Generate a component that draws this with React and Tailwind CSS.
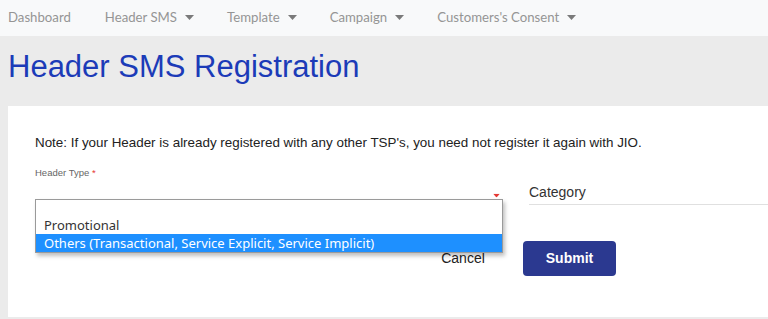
import React from 'react';

const navItems = [
  { label: 'Dashboard', caret: false },
  { label: 'Header SMS', caret: true },
  { label: 'Template', caret: true },
  { label: 'Campaign', caret: true },
  { label: "Customers's Consent", caret: true },
];

const Caret = ({ className }) => (
  <svg width="9" height="5" viewBox="0 0 9 5" className={className}>
    <path d="M0 0 L9 0 L4.5 5 Z" fill="currentColor" />
  </svg>
);

const App = () => {
  return (
    <div className="w-[768px] h-[319px] overflow-hidden bg-[#ebebeb]" style={{ fontFamily: '"Liberation Sans", Arial, sans-serif' }}>
      {/* top navigation */}
      <nav className="h-[36px] bg-[#f8f9fa] flex items-center pl-[8px] text-[13.2px] text-[#959595]" style={{ fontFamily: 'Lato, sans-serif' }}>
        {navItems.map((item, i) => (
          <div key={item.label} className={`flex items-center gap-[8px] ${i === 0 ? 'mr-[34px]' : 'mr-[33px]'}`}>
            <span>{item.label}</span>
            {item.caret && <Caret className="text-[#7a7a7a]" />}
          </div>
        ))}
      </nav>

      <h1 className="pl-[8px] pt-[13px] h-[70px] text-[31px] leading-[36px] text-[#1c3bb8] font-medium">
        Header SMS Registration
      </h1>

      {/* form card */}
      <div className="ml-[8px] h-[211px] bg-white pt-[29px] pl-[27px]">
        <p className="text-[13.4px] leading-[16px] text-[#222]">
          Note: If your Header is already registered with any other TSP's, you need not register it again with JIO.
        </p>

        <div className="flex gap-[26px] mt-[16px]">
          <div className="relative w-[468px]">
            <label className="block text-[9.5px] leading-[12px] text-[#666]">
              Header Type <span className="text-[#e53935]">*</span>
            </label>
            <div className="h-[26px] flex items-end justify-end pr-[2px]">
              <Caret className="text-[#e53935] mb-[7px] scale-75" />
            </div>

            {/* open option list */}
            <div className="absolute left-0 top-[32px] w-[468px] h-[54px] bg-white border border-[#9a9a9a] shadow-[2px_3px_4px_rgba(0,0,0,0.25)] flex flex-col justify-end text-[13px]" style={{ fontFamily: '"Noto Sans", sans-serif' }}>
              <div className="px-[8px] text-[#333] leading-[18px]">Promotional</div>
              <div className="px-[8px] bg-[#1e90ff] text-white leading-[18px] h-[18px]">
                Others (Transactional, Service Explicit, Service Implicit)
              </div>
            </div>
          </div>

          <div className="flex-1 pt-[15px]">
            <div className="h-[23px] border-b border-[#e0e0e0] text-[14px] leading-[20px] text-[#333]">Category</div>
          </div>
        </div>

        <div className="flex items-center mt-[36px] pl-[390px] gap-[22px]">
          <button className="w-[76px] h-[35px] text-[14px] text-[#222] font-medium">Cancel</button>
          <button className="w-[93px] h-[35px] rounded-[4px] bg-[#2b3990] text-white text-[14px] font-bold">Submit</button>
        </div>
      </div>
    </div>
  );
};

export default App;
